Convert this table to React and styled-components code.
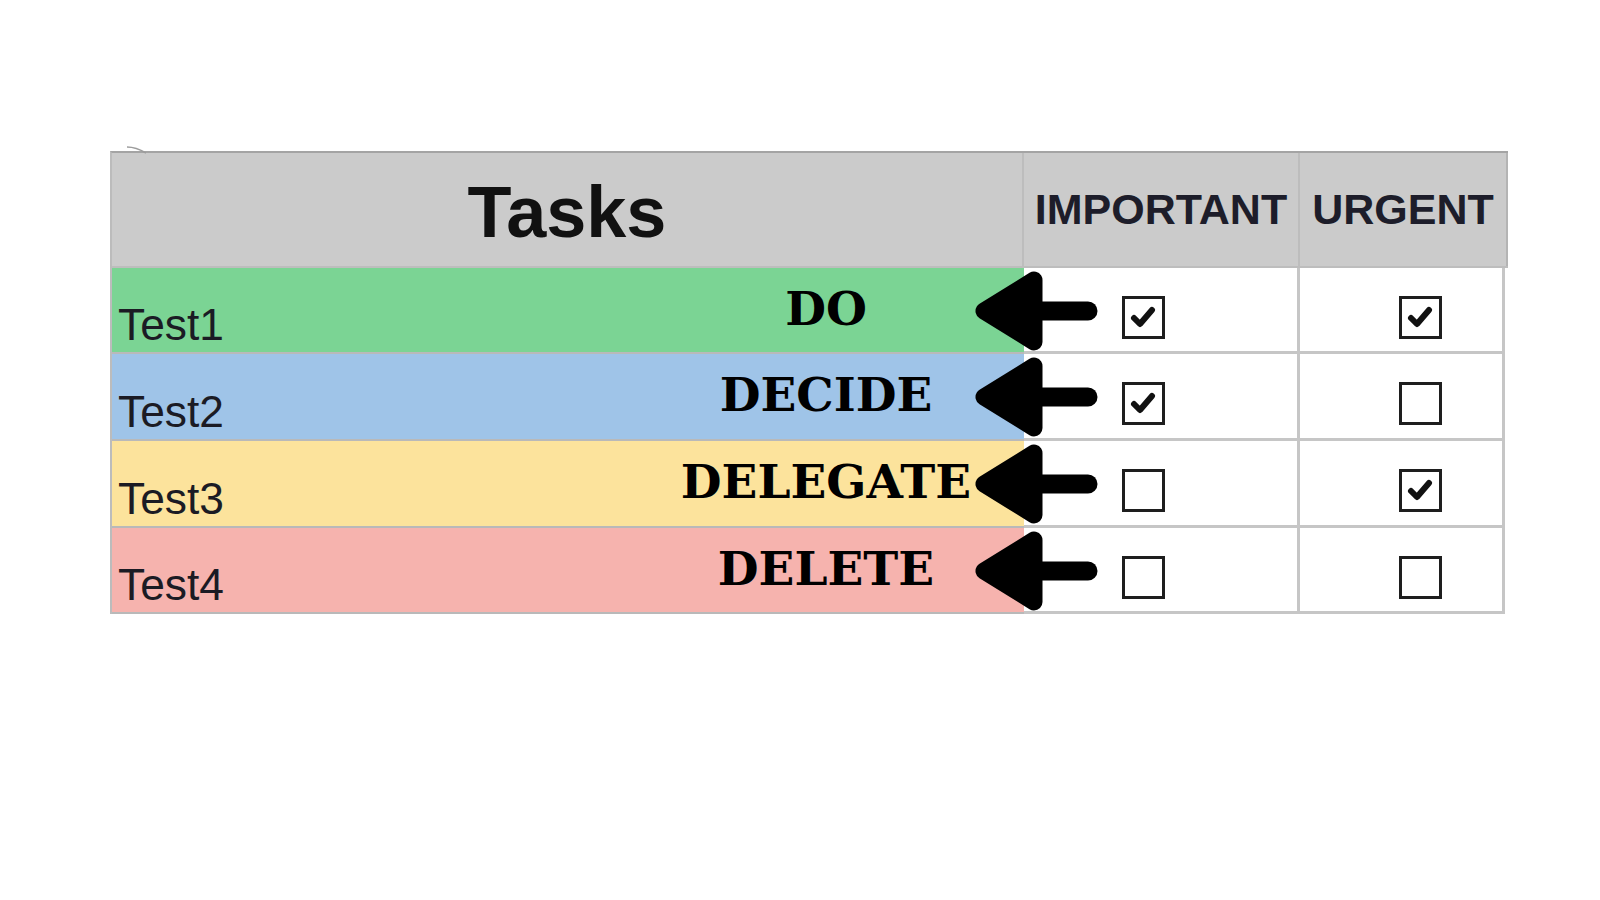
import React from "react";
import styled, { createGlobalStyle } from "styled-components";

const Global = createGlobalStyle`
  html, body { margin: 0; padding: 0; background: #ffffff; }
  body { width: 1600px; height: 900px; overflow: hidden; }
`;

const Page = styled.div`
  width: 1600px;
  height: 900px;
  padding-top: 151px;
  padding-left: 110px;
  box-sizing: border-box;
`;

const Table = styled.div`
  position: relative;
  display: flex;
  flex-direction: column;
  width: 1398px;
  border-top: 2px solid #a4a4a4;
  border-left: 2px solid #bcbcbc;
  box-sizing: border-box;
`;

const Corner = styled.svg`
  position: absolute;
  left: 14px;
  top: -8px;
`;

const HeaderRow = styled.div`
  display: grid;
  grid-template-columns: 912px 276px 208px;
  height: 113px;
  background: #cbcbcb;
  border-bottom: 2px solid #bdbdbd;
`;

const HeadCell = styled.div`
  display: flex;
  align-items: center;
  justify-content: center;
  border-right: 2px solid ${(p) => (p.$last ? "#b4b4b4" : "#bdbdbd")};
  font-family: "Liberation Sans", Arial, sans-serif;
  font-weight: 700;
  font-size: ${(p) => (p.$big ? "72px" : "43px")};
  line-height: 1;
  color: ${(p) => (p.$big ? "#111111" : "#1d1d2a")};
  padding-top: ${(p) => (p.$big ? "4px" : "0")};
  white-space: nowrap;
`;

const Row = styled.div`
  position: relative;
  display: grid;
  grid-template-columns: 912px 276px 205px;
  height: ${(p) => p.$h}px;
`;

const TaskCell = styled.div`
  display: flex;
  background: ${(p) => p.$bg};
  border-bottom: 2px solid #b9b9b9;
  padding-left: 6px;
`;

const TaskName = styled.div`
  align-self: flex-end;
  padding-bottom: 5px;
  font-family: "Liberation Sans", Arial, sans-serif;
  font-size: 45px;
  line-height: 1;
  color: #1b1b24;
  transform: scaleX(0.985);
  transform-origin: left bottom;
`;

const Label = styled.div`
  margin-left: auto;
  width: 392px;
  margin-right: 2px;
  padding-top: 17px;
  text-align: center;
  font-family: "DejaVu Serif", "Liberation Serif", serif;
  font-weight: 700;
  font-size: 47px;
  line-height: 1;
  color: #000000;
  white-space: nowrap;
`;

const CheckCell = styled.div`
  display: flex;
  align-items: flex-start;
  padding-left: ${(p) => p.$pad}px;
  padding-top: 28px;
  border-right: 3px solid #c6c6c6;
  border-bottom: 3px solid #c6c6c6;
  box-sizing: border-box;
`;

const Box = styled.div`
  width: 43px;
  height: 43px;
  box-sizing: border-box;
  border: 3px solid #1e1e1e;
  display: flex;
  align-items: center;
  justify-content: center;
`;

const ArrowSvg = styled.svg`
  position: absolute;
  left: 862px;
  top: ${(p) => p.$top}px;
`;

const Arrow = ({ top }) => (
  <ArrowSvg $top={top} width="130" height="84" viewBox="0 0 130 84">
    <polygon
      points="10,42 60,11 60,73"
      fill="#000"
      stroke="#000"
      strokeWidth="17"
      strokeLinejoin="round"
    />
    <line x1="58" y1="42" x2="114" y2="42" stroke="#000" strokeWidth="19" strokeLinecap="round" />
  </ArrowSvg>
);

const Check = ({ on }) => (
  <Box>
    {on && (
      <svg width="37" height="37" viewBox="0 0 37 37">
        <path
          d="M9 19 L15 25 L27 11"
          fill="none"
          stroke="#111"
          strokeWidth="6"
          strokeLinecap="round"
          strokeLinejoin="round"
        />
      </svg>
    )}
  </Box>
);

const rows = [
  { name: "Test1", label: "DO", bg: "#7bd494", imp: true, urg: true, h: 86 },
  { name: "Test2", label: "DECIDE", bg: "#9fc4e8", imp: true, urg: false, h: 87 },
  { name: "Test3", label: "DELEGATE", bg: "#fce39c", imp: false, urg: true, h: 87 },
  { name: "Test4", label: "DELETE", bg: "#f6b3ae", imp: false, urg: false, h: 86 },
];

export default function App() {
  return (
    <>
      <Global />
      <Page>
        <Table>
          <Corner width="24" height="10" viewBox="0 0 24 10">
            <path d="M1 2 Q10 2 20 8" stroke="#9c9c9c" strokeWidth="1.5" fill="none" />
          </Corner>
          <HeaderRow>
            <HeadCell $big>Tasks</HeadCell>
            <HeadCell>IMPORTANT</HeadCell>
            <HeadCell $last>URGENT</HeadCell>
          </HeaderRow>
          {rows.map((r) => (
            <Row key={r.name} $h={r.h}>
              <TaskCell $bg={r.bg}>
                <TaskName>{r.name}</TaskName>
                <Label>{r.label}</Label>
              </TaskCell>
              <CheckCell $pad={98}>
                <Check on={r.imp} />
              </CheckCell>
              <CheckCell $pad={99}>
                <Check on={r.urg} />
              </CheckCell>
              <Arrow top={1} />
            </Row>
          ))}
        </Table>
      </Page>
    </>
  );
}
